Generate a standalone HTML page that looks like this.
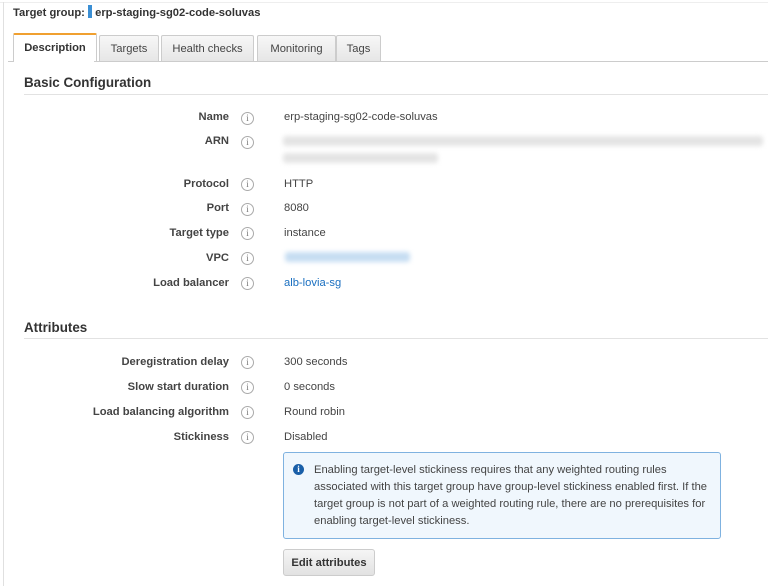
<!DOCTYPE html>
<html><head><style>
body{margin:0;width:768px;height:586px;overflow:hidden;background:#fff;font-family:"Liberation Sans",sans-serif;font-size:11.2px;color:#444;position:relative}
.a{position:absolute;white-space:nowrap}
.lbl{position:absolute;right:539px;font-weight:bold;color:#444;text-align:right;margin-top:2px}
.ic{position:absolute;left:241px;width:11px;height:11px;border:1px solid #aaa;border-radius:50%;font-size:9px;line-height:11px;text-align:center;color:#777;font-family:"Liberation Serif",serif;margin-top:2px}
.val{position:absolute;left:284px;color:#444;margin-top:2px}
.tab{position:absolute;top:35px;height:25px;border:1px solid #ccc;border-bottom:none;background:linear-gradient(#f7f7f7,#e6e6e6);text-align:center;line-height:27px;color:#444;border-radius:2px 2px 0 0}
h2{position:absolute;margin:0;font-size:13.4px;font-weight:bold;color:#333;left:24px}
.hl{position:absolute;left:24px;right:0;height:1px;background:#e2e2e2}
.blur{position:absolute;height:10px;border-radius:3px;filter:blur(2.5px)}
</style></head><body>
<div class="a" style="left:0;top:2px;width:768px;height:1px;background:#eee"></div>
<div class="a" style="left:3px;top:2px;width:1px;height:584px;background:#e0e0e0"></div>
<div class="a" style="left:13px;top:5px;font-weight:bold;color:#333">Target group: <span style="display:inline-block;width:4px;height:13px;background:#3b8fd4;vertical-align:-2px"></span> erp-staging-sg02-code-soluvas</div>
<div class="a" style="left:8px;top:61px;width:760px;height:1px;background:#ccc"></div>
<div class="tab" style="left:13px;width:82px;background:#fff;border-top:2px solid #f0a030;height:26px;top:33px;font-weight:bold;color:#333">Description</div>
<div class="tab" style="left:99px;width:58px">Targets</div>
<div class="tab" style="left:161px;width:91px">Health checks</div>
<div class="tab" style="left:257px;width:77px">Monitoring</div>
<div class="tab" style="left:336px;width:43px">Tags</div>
<div style="position:absolute;left:14px;top:61px;width:80px;height:2px;background:#fff"></div>
<h2 style="top:75px">Basic Configuration</h2>
<div class="hl" style="top:94px"></div>

<div class="lbl" style="top:109px">Name</div><div class="ic" style="top:110px">i</div><div class="val" style="top:109px">erp-staging-sg02-code-soluvas</div>
<div class="lbl" style="top:133px">ARN</div><div class="ic" style="top:134px">i</div>
<div class="blur" style="left:283px;top:136px;width:480px;background:#e4e4e4"></div>
<div class="blur" style="left:283px;top:153px;width:155px;background:#e4e4e4"></div>
<div class="lbl" style="top:176px">Protocol</div><div class="ic" style="top:176px">i</div><div class="val" style="top:176px">HTTP</div>
<div class="lbl" style="top:200px">Port</div><div class="ic" style="top:201px">i</div><div class="val" style="top:200px">8080</div>
<div class="lbl" style="top:225px">Target type</div><div class="ic" style="top:225px">i</div><div class="val" style="top:225px">instance</div>
<div class="lbl" style="top:250px">VPC</div><div class="ic" style="top:250px">i</div>
<div class="blur" style="left:285px;top:252px;width:125px;background:#c6ddf2"></div>
<div class="lbl" style="top:275px">Load balancer</div><div class="ic" style="top:275px">i</div><div class="val" style="top:275px;color:#1a6fc0">alb-lovia-sg</div>

<h2 style="top:320px">Attributes</h2>
<div class="hl" style="top:338px"></div>
<div class="lbl" style="top:354px">Deregistration delay</div><div class="ic" style="top:354px">i</div><div class="val" style="top:354px">300 seconds</div>
<div class="lbl" style="top:379px">Slow start duration</div><div class="ic" style="top:379px">i</div><div class="val" style="top:379px">0 seconds</div>
<div class="lbl" style="top:404px">Load balancing algorithm</div><div class="ic" style="top:404px">i</div><div class="val" style="top:404px">Round robin</div>
<div class="lbl" style="top:429px">Stickiness</div><div class="ic" style="top:429px">i</div><div class="val" style="top:429px">Disabled</div>

<div class="a" style="left:283px;top:452px;width:436px;height:85px;border:1px solid #7fb2e0;border-radius:3px;background:#f0f7fd"></div>
<div class="a" style="left:293px;top:464px;width:11px;height:11px;border-radius:50%;background:#1a5fa8;color:#fff;font-size:9px;line-height:11px;text-align:center;font-weight:bold;font-family:'Liberation Serif',serif">i</div>
<div class="a" style="left:314px;top:462px;line-height:17px;white-space:normal;width:400px;color:#444">Enabling target-level stickiness requires that any weighted routing rules associated with this target group have group-level stickiness enabled first. If the target group is not part of a weighted routing rule, there are no prerequisites for enabling target-level stickiness.</div>
<div class="a" style="left:283px;top:549px;width:90px;height:25px;border:1px solid #ccc;border-radius:3px;background:linear-gradient(#f5f5f5,#e2e2e2);text-align:center;line-height:27px;font-weight:bold;color:#333">Edit attributes</div>
</body></html>
